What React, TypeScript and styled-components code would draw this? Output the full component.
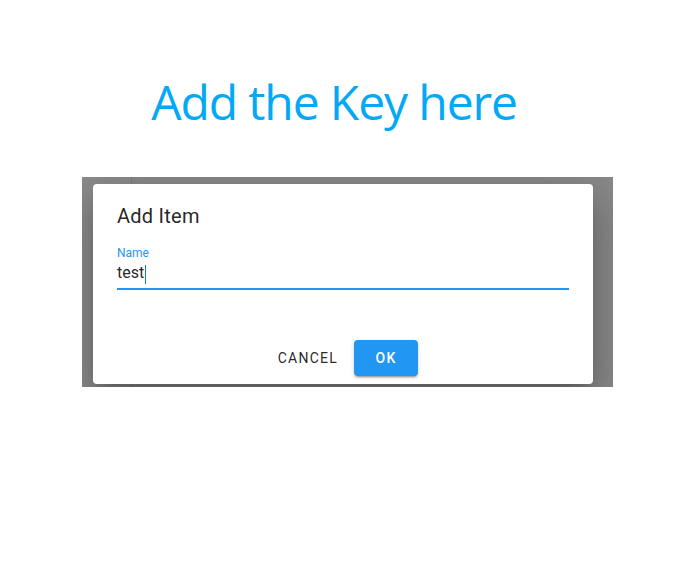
import React from "react";
import styled, { createGlobalStyle } from "styled-components";

const GlobalStyle = createGlobalStyle`
    html, body {
        margin: 0;
        padding: 0;
        background: #ffffff;
        font-family: Roboto, "Liberation Sans", sans-serif;
    }
`

const Page = styled.div`
    width: 696px;
    height: 565px;
    padding-top: 78px;
    box-sizing: border-box;
`

const Heading = styled.h1`
    margin: 0;
    padding-right: 28px;
    font-family: "Open Sans", "Noto Sans", sans-serif;
    font-weight: 400;
    font-size: 48px;
    line-height: 48px;
    letter-spacing: -1.1px;
    color: #03a9f4;
    text-align: center;
`

// 後ろの画面 + オーバーレイ + ダイアログを同じグリッドセルに重ねる
const Stage = styled.div`
    display: grid;
    width: 531px;
    height: 210px;
    margin: 51px 0 0 82px;
    overflow: hidden;
`

const Backdrop = styled.div`
    grid-area: 1 / 1;
    display: flex;
    background: #898989;
`

const SidePane = styled.div`
    width: 49px;
    background: #8c8c8c;
    border-right: 1px solid #7d7d7d;
`

const DialogLayer = styled.div`
    grid-area: 1 / 1;
    padding: 7px 0 0 11px;
`

const Dialog = styled.div`
    display: flex;
    flex-direction: column;
    width: 500px;
    height: 200px;
    background: #ffffff;
    border-radius: 4px;
    box-shadow: 0 11px 15px -7px rgba(0, 0, 0, 0.2), 0 24px 38px 3px rgba(0, 0, 0, 0.14), 0 9px 46px 8px rgba(0, 0, 0, 0.12);
`

const DialogTitle = styled.div`
    padding: 16px 24px 0;
    font-size: 20px;
    font-weight: 400;
    line-height: 32px;
    letter-spacing: 0.0125em;
    color: rgba(0, 0, 0, 0.87);
`

const Field = styled.div`
    display: flex;
    flex-direction: column;
    margin: 13px 24px 0;
`

const FieldLabel = styled.label`
    font-size: 12px;
    line-height: 16px;
    color: #2196f3;
`

const FieldInput = styled.div`
    display: flex;
    align-items: flex-start;
    padding-bottom: 3px;
    height: 24px;
    font-size: 16px;
    line-height: 24px;
    color: rgba(0, 0, 0, 0.87);
    border-bottom: 2px solid #2196f3;
`

const Caret = styled.span`
    width: 1px;
    height: 19px;
    margin: 4px 0 0 1px;
    background: #1976d2;
`

const Actions = styled.div`
    display: flex;
    justify-content: flex-end;
    align-items: center;
    margin-top: auto;
    padding: 8px 175px 8px 8px;
`

const Button = styled.button<{ $primary?: boolean }>`
    height: 36px;
    min-width: 64px;
    padding: 0 16px;
    border: none;
    border-radius: 4px;
    font-family: Roboto, "Liberation Sans", sans-serif;
    font-size: 14px;
    font-weight: ${(p) => (p.$primary ? 500 : 400)};
    letter-spacing: 0.0892em;
    text-transform: uppercase;
    cursor: pointer;
    color: ${(p) => (p.$primary ? "#ffffff" : "rgba(0, 0, 0, 0.87)")};
    background: ${(p) => (p.$primary ? "#2196f3" : "transparent")};
    box-shadow: ${(p) =>
        p.$primary
            ? "0 3px 1px -2px rgba(0,0,0,0.2), 0 2px 2px 0 rgba(0,0,0,0.14), 0 1px 5px 0 rgba(0,0,0,0.12)"
            : "none"};
`

export default function App() {
    return (
        <>
            <GlobalStyle />
            <Page>
                <Heading>Add the Key here</Heading>
                <Stage>
                    <Backdrop>
                        <SidePane />
                    </Backdrop>
                    <DialogLayer>
                        <Dialog>
                            <DialogTitle>Add Item</DialogTitle>
                            <Field>
                                <FieldLabel>Name</FieldLabel>
                                <FieldInput>
                                    test
                                    <Caret />
                                </FieldInput>
                            </Field>
                            <Actions>
                                <Button>Cancel</Button>
                                <Button $primary>OK</Button>
                            </Actions>
                        </Dialog>
                    </DialogLayer>
                </Stage>
            </Page>
        </>
    );
}
